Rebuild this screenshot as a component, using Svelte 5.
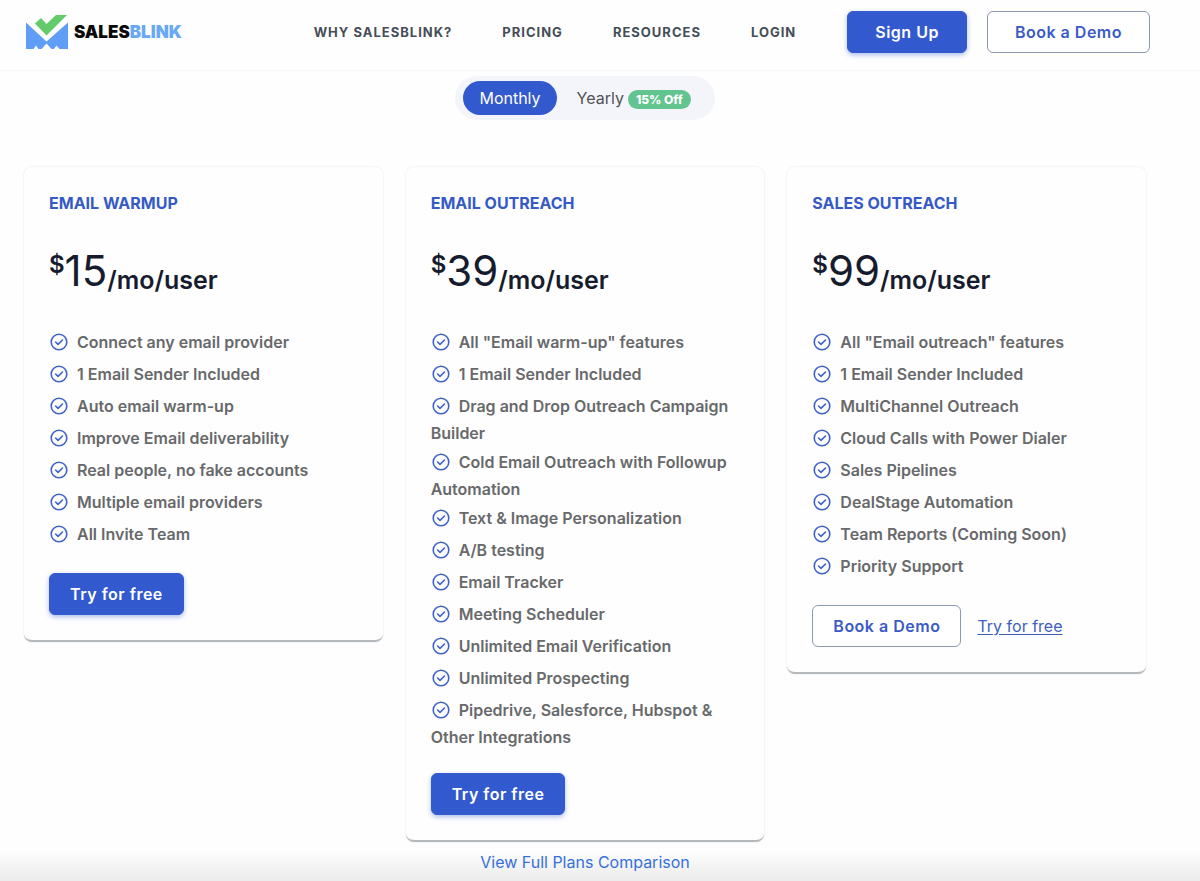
<script>
  const navLinks = ['Why SalesBlink?', 'Pricing', 'Resources', 'Login'];

  const plans = [
    {
      name: 'Email Warmup',
      price: 15,
      features: [
        'Connect any email provider',
        '1 Email Sender Included',
        'Auto email warm-up',
        'Improve Email deliverability',
        'Real people, no fake accounts',
        'Multiple email providers',
        'All Invite Team'
      ]
    },
    {
      name: 'Email Outreach',
      price: 39,
      features: [
        'All "Email warm-up" features',
        '1 Email Sender Included',
        'Drag and Drop Outreach Campaign Builder',
        'Cold Email Outreach with Followup Automation',
        'Text & Image Personalization',
        'A/B testing',
        'Email Tracker',
        'Meeting Scheduler',
        'Unlimited Email Verification',
        'Unlimited Prospecting',
        'Pipedrive, Salesforce, Hubspot & Other Integrations'
      ]
    },
    {
      name: 'Sales Outreach',
      price: 99,
      demo: true,
      features: [
        'All "Email outreach" features',
        '1 Email Sender Included',
        'MultiChannel Outreach',
        'Cloud Calls with Power Dialer',
        'Sales Pipelines',
        'DealStage Automation',
        'Team Reports (Coming Soon)',
        'Priority Support'
      ]
    }
  ];

  let billing = $state('monthly');
</script>

<header class="header">
  <a class="logo" href="#home">
    <svg width="45" height="36" viewBox="0 0 45 36" aria-hidden="true">
      <path fill="#5f9df7" d="M2 8.5 22.5 27.5 44 8.5V35H35.5L32.5 31.5 30 35H27.5L22.5 29.5 17.5 35H14.5L12 31.5 9.5 35H2Z" />
      <path fill="#63cb69" d="M11 9.5 17 4 22.5 10 32 1H43L22.5 21.5Z" />
    </svg>
    <span>SALES<b>BLINK</b></span>
  </a>

  <nav class="nav">
    {#each navLinks as link}
      <a href="#{link.toLowerCase()}">{link}</a>
    {/each}
  </nav>

  <div class="actions">
    <button class="btn primary">Sign Up</button>
    <button class="btn outline">Book a Demo</button>
  </div>
</header>

<main class="pricing">
  <div class="toggle">
    <button class:active={billing === 'monthly'} onclick={() => (billing = 'monthly')}>
      Monthly
    </button>
    <button class:active={billing === 'yearly'} onclick={() => (billing = 'yearly')}>
      Yearly <span class="badge">15% Off</span>
    </button>
  </div>

  <div class="plans">
    {#each plans as plan}
      <section class="card">
        <h2>{plan.name}</h2>
        <p class="price">
          <span class="currency">$</span><span class="amount">{plan.price}</span><span class="unit">/mo/user</span>
        </p>
        <ul>
          {#each plan.features as feature}
            <li>
              <svg class="check" width="18" height="30" viewBox="0 0 18 30" aria-hidden="true">
                <circle cx="9" cy="15" r="7.8" />
                <path d="M5.6 15 8 17.3 12.5 13" />
              </svg>{feature}
            </li>
          {/each}
        </ul>
        <div class="cta">
          {#if plan.demo}
            <button class="btn outline">Book a Demo</button>
            <a href="#trial">Try for free</a>
          {:else}
            <button class="btn primary">Try for free</button>
          {/if}
        </div>
      </section>
    {/each}
  </div>
</main>

<footer class="compare">
  <a href="#compare">View Full Plans Comparison</a>
</footer>

<style>
  :global(body) {
    margin: 0;
    background: #fefefe;
    color: #161c2d;
    font-family: Inter, Roboto, sans-serif;
    font-size: 16px;
    line-height: 24px;
  }

  .header {
    display: flex;
    align-items: center;
    box-sizing: border-box;
    padding: 11px 50px 17px 24px;
    border-bottom: 1px solid #f6f6f7;
  }

  .logo {
    display: flex;
    align-items: center;
    gap: 5px;
    color: #0a0a0a;
    font-size: 17px;
    font-weight: 900;
    text-decoration: none;
  }

  .logo b {
    color: #68a8f5;
    font-weight: 900;
  }

  .nav {
    display: flex;
    gap: 50px;
    margin-left: auto;
  }

  .nav a {
    color: #454d58;
    font-size: 13px;
    font-weight: 700;
    letter-spacing: 1px;
    text-decoration: none;
    text-transform: uppercase;
  }

  .actions {
    display: flex;
    gap: 20px;
    margin-left: 51px;
  }

  .btn {
    box-sizing: border-box;
    padding: 8px 20px;
    border: 1px solid #335bcf;
    border-radius: 6px;
    font: inherit;
    font-weight: 600;
    letter-spacing: 0.5px;
    cursor: pointer;
  }

  .header .btn {
    padding: 8px 27px;
  }

  .primary {
    background: #3259ce;
    color: #fff;
    box-shadow: 0 2px 5px rgba(50, 89, 206, 0.4);
  }

  .outline {
    background: #fff;
    border-color: #8b99b5;
    color: #3a5bc7;
  }

  .pricing {
    display: flex;
    flex-direction: column;
    align-items: center;
    padding: 5px 54px 0 24px;
  }

  .toggle {
    display: flex;
    gap: 4px;
    padding: 5px 8px;
    border-radius: 22px;
    background: #f4f5fa;
  }

  .toggle button {
    display: flex;
    align-items: center;
    gap: 4px;
    padding: 5px 16px;
    border: 0;
    border-radius: 17px;
    background: none;
    color: #505257;
    font: inherit;
    cursor: pointer;
  }

  .toggle button.active {
    background: #3259ce;
    color: #fff;
  }

  .badge {
    margin-top: 3px;
    padding: 0 8px;
    border-radius: 10px;
    background: #62c48f;
    color: #fff;
    font-size: 12px;
    font-weight: 800;
    line-height: 19px;
  }

  .plans {
    display: grid;
    grid-template-columns: repeat(3, 1fr);
    align-items: start;
    gap: 23px;
    width: 100%;
    margin-top: 47px;
  }

  .card {
    padding: 24px 25px 25px;
    border-bottom: 2px solid #b3b9bd;
    border-radius: 8px;
    background: #fefefe;
    box-shadow: 0 0 2px rgba(22, 28, 45, 0.12);
  }

  .card h2 {
    margin: 0;
    color: #355ac8;
    font-size: 16px;
    font-weight: 700;
    text-transform: uppercase;
  }

  .price {
    display: flex;
    align-items: flex-start;
    height: 60px;
    margin: 26px 0;
    font-weight: 600;
  }

  .currency {
    font-size: 24px;
    line-height: 48px;
  }

  .amount {
    font-size: 42px;
    font-weight: 400;
    line-height: 60px;
  }

  .unit {
    font-size: 25px;
    line-height: 78px;
  }

  ul {
    margin: 0;
    padding: 0;
    list-style: none;
  }

  li {
    margin-bottom: 2px;
    color: #68696b;
    font-weight: 600;
  }

  .check {
    margin: 0 9px 0 1px;
    vertical-align: -9px;
    fill: none;
    stroke: #3f62ca;
    stroke-width: 1.6;
    stroke-linecap: round;
    stroke-linejoin: round;
  }

  .cta {
    display: flex;
    align-items: center;
    gap: 16px;
    margin-top: 24px;
  }

  .cta a {
    color: #3f5fbd;
    text-underline-offset: 2px;
  }

  .compare {
    padding: 8px 54px 7px 24px;
    background: linear-gradient(#fefefe 20%, #ebebeb);
    text-align: center;
  }

  .compare a {
    color: #3570d8;
    text-decoration: none;
  }
</style>
